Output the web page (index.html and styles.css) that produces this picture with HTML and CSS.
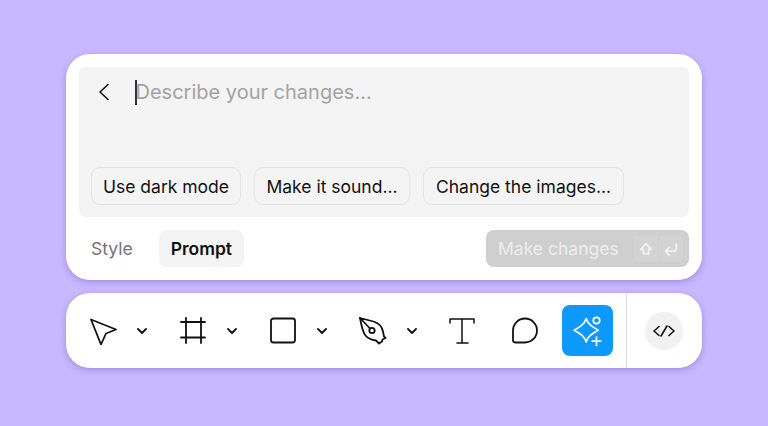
FILE: index.html
```html
<!DOCTYPE html>
<html lang="en">

<head>
	<meta charset="UTF-8" />
	<title>Make changes</title>
	<link rel="stylesheet" href="styles.css">
</head>

<body>
	<div class="panel">
		<div class="prompt-box">
			<div class="prompt-top">
				<svg class="back" width="12" height="18" viewBox="0 0 12 18"><path d="M10 1.500 2 9l8 7.500" /></svg>
				<span class="caret"></span>
				<span class="placeholder">Describe your changes...</span>
			</div>
			<div class="chips">
				<button class="chip chip-1">Use dark mode</button>
				<button class="chip chip-2">Make it sound...</button>
				<button class="chip chip-3">Change the images...</button>
			</div>
		</div>
		<div class="panel-foot">
			<span class="tab">Style</span>
			<span class="tab tab-active">Prompt</span>
			<div class="submit">
				<span class="submit-label">Make changes</span>
				<span class="keys">
					<span class="key">
						<svg width="14" height="14" viewBox="0 0 16 16"><path d="M8 2 2 8.500h3v5h6v-5h3z" /></svg>
					</span>
					<span class="key">
						<svg width="14" height="14" viewBox="0 0 16 16"><path d="M14 2v6a2.500 2.500 0 0 1-2.500 2.500H2M6 6 1.800 10.500 6 15" /></svg>
					</span>
				</span>
			</div>
		</div>
	</div>

	<div class="toolbar">
		<div class="tool tool-more">
			<svg class="icon" width="28" height="28" viewBox="0 0 28 28"><path d="M2 2.500 27 12.500 17 16.500 12 27.500z" /></svg>
			<svg class="chev" width="10" height="6" viewBox="0 0 10 6"><path d="M1 1l4 4 4-4" /></svg>
		</div>
		<div class="tool tool-more">
			<svg class="icon" width="28" height="28" viewBox="0 0 28 28"><path d="M7 1v25M22 1v25M2 5h24M2 20.500h24" /></svg>
			<svg class="chev" width="10" height="6" viewBox="0 0 10 6"><path d="M1 1l4 4 4-4" /></svg>
		</div>
		<div class="tool tool-more">
			<svg class="icon" width="28" height="28" viewBox="0 0 28 28"><rect x="2" y="1.500" width="24" height="24" rx="2.500" /></svg>
			<svg class="chev" width="10" height="6" viewBox="0 0 10 6"><path d="M1 1l4 4 4-4" /></svg>
		</div>
		<div class="tool tool-more">
			<svg class="icon" width="28" height="28" viewBox="0 0 28 28"><path d="M1 1 14.500 4.500C19.500 6 23 10 24 14.500L25 19.500 26.500 21 23.500 22.500 23 24.500 20 26.500 17 23.500C13 23 9 21.500 6.500 18.500 4 15.500 3 12 1 1z" /><circle cx="13" cy="13.500" r="2.700" /><path d="M1 1 11 11.500" /></svg>
			<svg class="chev" width="10" height="6" viewBox="0 0 10 6"><path d="M1 1l4 4 4-4" /></svg>
		</div>
		<div class="tool tool-text">
			<svg class="icon thin" width="28" height="28" viewBox="0 0 28 28"><path d="M1 6V2h24v4M13 2v24M8 26h11" /></svg>
		</div>
		<div class="tool tool-comment">
			<svg class="icon" width="28" height="28" viewBox="0 0 28 28"><path d="M1 13.500a12 12 0 1 1 12 12H3.500A2.500 2.500 0 0 1 1 23z" /></svg>
		</div>
		<div class="tool-ai">
			<svg width="34" height="36" viewBox="0 0 34 36"><path d="M15.200 5.500c1.700 5.700 6 8.300 12 11.700-6 3.400-10.300 6-12 11.700-1.700-5.700-6-8.300-12-11.700 6-3.400 10.300-6 12-11.700z" /><circle cx="25.500" cy="7.500" r="3.200" /><path d="M25.500 24v8.400M21.300 28.200h8.400" /></svg>
		</div>
		<div class="code-wrap">
			<div class="code-btn">
				<svg width="22" height="14" viewBox="0 0 22 14"><path d="M6 2.500 1 7l5 4.500M16 2.500 21 7l-5 4.500M14 2 8 12" /></svg>
			</div>
		</div>
	</div>
</body>

</html>
```

FILE: styles.css
```css
body {
	margin: 0;
	height: 426px;
	background-color: #c7b9ff;
	font-family: Inter, "Liberation Sans", sans-serif;
	display: flex;
	flex-direction: column;
	align-items: center;
	padding-top: 54px;
	box-sizing: border-box;
	overflow: hidden;
}

svg {
	display: block;
	fill: none;
	stroke: #111111;
	stroke-width: 1.8;
	stroke-linejoin: round;
	stroke-linecap: round;
}

.panel {
	width: 636px;
	height: 226px;
	box-sizing: border-box;
	padding: 13px;
	background-color: #ffffff;
	border-radius: 24px;
	box-shadow: 0 2px 6px rgba(80, 60, 160, 0.35);
}

.prompt-box {
	height: 150px;
	box-sizing: border-box;
	background-color: #f4f4f4;
	border-radius: 6px;
	padding: 12px;
	display: flex;
	flex-direction: column;
	justify-content: space-between;
}

.prompt-top {
	display: flex;
	align-items: center;
	height: 26px;
}

.back {
	margin-left: 7px;
	stroke-width: 1.6;
}

.caret {
	width: 1.5px;
	height: 25px;
	background-color: #333333;
	margin-left: 25px;
}

.placeholder {
	font-size: 20px;
	color: #a3a3a3;
	margin-left: -1px;
}

.chips {
	display: flex;
	gap: 13px;
}

.chip {
	height: 38px;
	box-sizing: border-box;
	padding: 0;
	font-family: inherit;
	font-size: 17.5px;
	color: #111111;
	background-color: #f4f4f4;
	border: 1.5px solid #e3e3e3;
	border-radius: 9px;
	text-align: center;
}

.chip-1 {
	width: 150px;
}

.chip-2 {
	width: 156px;
}

.chip-3 {
	width: 201px;
}

.panel-foot {
	display: flex;
	align-items: center;
	margin-top: 13px;
}

.tab {
	font-size: 17.5px;
	color: #757575;
	padding: 0 12px;
	height: 37px;
	line-height: 37px;
	border-radius: 8px;
	margin-right: 14px;
}

.tab-active {
	color: #111111;
	font-weight: 600;
	background-color: #f4f4f4;
}

.submit {
	margin-left: auto;
	width: 203px;
	height: 37px;
	box-sizing: border-box;
	padding: 0 6px 0 12px;
	display: flex;
	align-items: center;
	justify-content: space-between;
	background-color: #cfcfcf;
	border-radius: 8px;
}

.submit-label {
	font-size: 17.5px;
	color: #eeeeee;
}

.keys {
	display: flex;
	gap: 1px;
}

.key {
	width: 24px;
	height: 26px;
	display: flex;
	align-items: center;
	justify-content: center;
	background-color: #d3d3d3;
	border-radius: 3px;
}

.key svg {
	stroke: #f2f2f2;
	stroke-width: 2;
}

.toolbar {
	width: 636px;
	height: 75px;
	margin-top: 13px;
	padding-left: 23px;
	box-sizing: border-box;
	display: flex;
	align-items: center;
	background-color: #ffffff;
	border-radius: 24px;
	box-shadow: 0 2px 6px rgba(80, 60, 160, 0.35);
}

.tool {
	display: flex;
	align-items: center;
}

.tool-more {
	width: 90px;
}

.tool-text {
	width: 63px;
}

.tool-comment {
	width: 50px;
}

.thin {
	stroke-width: 1.5;
}

.chev {
	margin-left: 20px;
	stroke-width: 1.8;
}

.tool-ai {
	width: 51px;
	height: 51px;
	display: flex;
	align-items: center;
	justify-content: center;
	background-color: #0d99ff;
	border-radius: 8px;
}

.tool-ai svg {
	stroke: #ffffff;
	stroke-width: 1.7;
}

.code-wrap {
	height: 100%;
	margin-left: 12.5px;
	padding-left: 18.5px;
	border-left: 1.5px solid #dedede;
	display: flex;
	align-items: center;
}

.code-btn {
	width: 38px;
	height: 38px;
	display: flex;
	align-items: center;
	justify-content: center;
	background-color: #f2f2f2;
	border-radius: 50%;
}

.code-btn svg {
	stroke-width: 1.6;
}
```
